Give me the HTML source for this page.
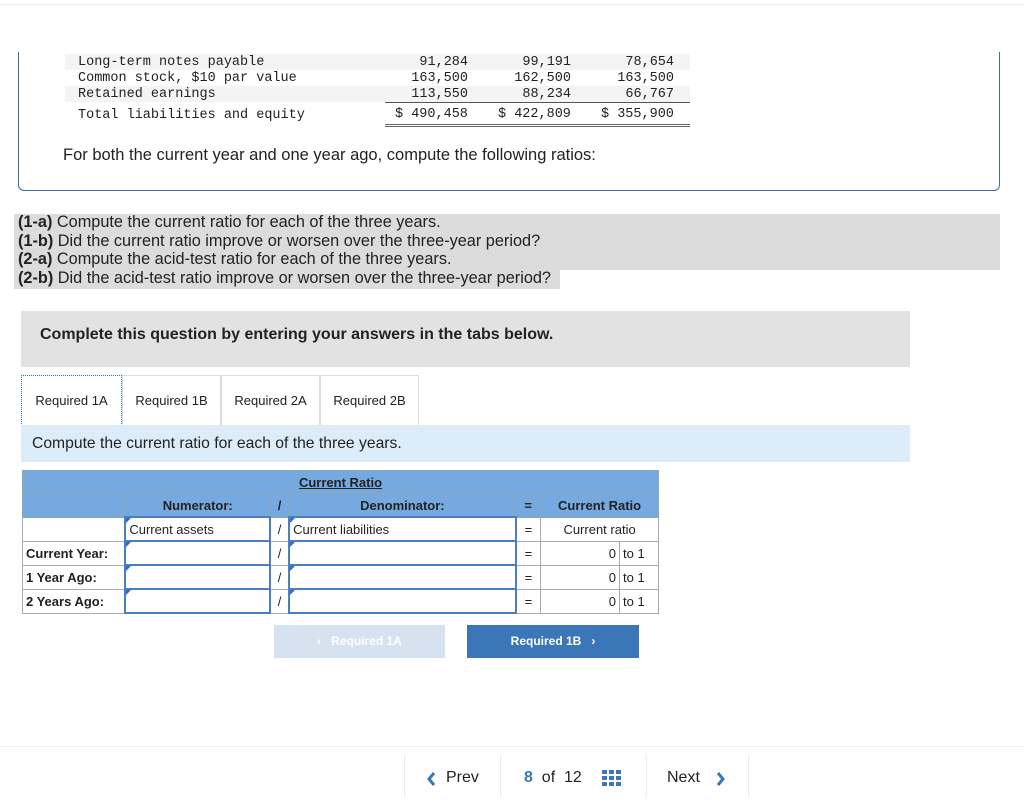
<!DOCTYPE html>
<html><head><meta charset="utf-8"><style>
body{margin:0;width:1024px;height:809px;background:#fff;position:relative;overflow:hidden;font-family:"Liberation Sans",Arial,sans-serif;color:#222}
.a{position:absolute}
.m{font-family:"Liberation Mono",monospace;font-size:13.5px;line-height:16px;white-space:pre}
.r{text-align:right}
table{border-collapse:collapse;font-size:13px}
td{border:1px solid #aaa;height:22px;padding:0 3px}
.h td{background:#75a9e0;font-weight:bold;text-align:center;border-color:#8aa}
.in{border:2px solid #4a7fbf;position:relative}
.in:before{content:"";position:absolute;left:0;top:0;border-left:5px solid #2e6fc0;border-bottom:5px solid transparent}
.c{text-align:center}
</style></head><body>
<div class="a" style="left:0;top:4px;width:1024px;border-top:1px solid #eee"></div>
<div class="a" style="left:18px;top:52px;width:980px;height:138px;border:1px solid #3d6ea8;border-top:none;border-radius:0 0 6px 6px"></div>
<div class="a" style="left:65px;top:54px;width:625px;height:16px;background:#f4f4f4"></div>
<div class="a" style="left:65px;top:86px;width:625px;height:16px;background:#f4f4f4"></div>
<div class="a m" style="left:78px;top:55px">Long-term notes payable
Common stock, $10 par value
Retained earnings</div>
<div class="a m" style="left:78px;top:108px">Total liabilities and equity</div>
<div class="a m r" style="left:380px;top:55px;width:88px">91,284
163,500
113,550</div>
<div class="a m r" style="left:480px;top:55px;width:91px">99,191
162,500
88,234</div>
<div class="a m r" style="left:590px;top:55px;width:84px">78,654
163,500
66,767</div>
<div class="a m" style="left:395px;top:107px">$ 490,458</div>
<div class="a m" style="left:498px;top:107px">$ 422,809</div>
<div class="a m" style="left:601px;top:107px">$ 355,900</div>
<div class="a" style="left:385px;top:102px;width:305px;border-top:1px solid #555"></div>
<div class="a" style="left:385px;top:124px;width:305px;border-top:3px double #666;height:2px"></div>
<div class="a" style="left:63px;top:146px;font-size:16.5px">For both the current year and one year ago, compute the following ratios:</div>

<div class="a" style="left:14px;top:214px;width:986px;height:56px;background:#dcdcdc"></div>
<div class="a" style="left:14px;top:270px;width:546px;height:19px;background:#dcdcdc"></div>
<div class="a" style="left:18px;top:213px;font-size:16.3px;line-height:18.5px"><b>(1-a)</b> Compute the current ratio for each of the three years.<br><b>(1-b)</b> Did the current ratio improve or worsen over the three-year period?<br><b>(2-a)</b> Compute the acid-test ratio for each of the three years.<br><b>(2-b)</b> Did the acid-test ratio improve or worsen over the three-year period?</div>

<div class="a" style="left:21px;top:311px;width:889px;height:56px;background:#e2e2e2"></div>
<div class="a" style="left:40px;top:326px;font-size:16px;font-weight:bold">Complete this question by entering your answers in the tabs below.</div>

<div class="a" style="left:21px;top:375px;width:99px;height:49px;border:1px dotted #2e6fc0;font-size:13px;line-height:49px;text-align:center">Required 1A</div>
<div class="a" style="left:122px;top:375px;width:97px;height:49px;border:1px solid #ddd;font-size:13px;line-height:49px;text-align:center">Required 1B</div>
<div class="a" style="left:221px;top:375px;width:97px;height:49px;border:1px solid #ddd;font-size:13px;line-height:49px;text-align:center">Required 2A</div>
<div class="a" style="left:320px;top:375px;width:97px;height:49px;border:1px solid #ddd;font-size:13px;line-height:49px;text-align:center">Required 2B</div>
<div class="a" style="left:21px;top:425px;width:889px;height:37px;background:#dcecf9"></div>
<div class="a" style="left:32px;top:435px;font-size:15.7px">Compute the current ratio for each of the three years.</div>

<table class="a" style="left:22px;top:470px;width:637px">
<tr class="h"><td colspan="7" style="height:22px"><u>Current Ratio</u></td></tr>
<tr class="h"><td style="background:#75a9e0;width:96px"></td><td style="width:138px">Numerator:</td><td style="width:12px">/</td><td style="width:220px">Denominator:</td><td style="width:18px">=</td><td colspan="2">Current Ratio</td></tr>
<tr><td></td><td class="in">Current assets</td><td class="c">/</td><td class="in">Current liabilities</td><td class="c">=</td><td colspan="2" class="c">Current ratio</td></tr>
<tr><td><b>Current Year:</b></td><td class="in"></td><td class="c">/</td><td class="in"></td><td class="c">=</td><td class="r" style="width:72px">0</td><td style="width:32px">to 1</td></tr>
<tr><td><b>1 Year Ago:</b></td><td class="in"></td><td class="c">/</td><td class="in"></td><td class="c">=</td><td class="r">0</td><td>to 1</td></tr>
<tr><td><b>2 Years Ago:</b></td><td class="in"></td><td class="c">/</td><td class="in"></td><td class="c">=</td><td class="r">0</td><td>to 1</td></tr>
</table>

<div class="a" style="left:274px;top:625px;width:171px;height:33px;background:#d6e2f0;color:#fff;font-size:12px;font-weight:bold;line-height:33px;text-align:center">‹ &nbsp; Required 1A</div>
<div class="a" style="left:467px;top:625px;width:172px;height:33px;background:#3a76b8;color:#fff;font-size:12px;font-weight:bold;line-height:33px;text-align:center">Required 1B &nbsp; ›</div>

<div class="a" style="left:0;top:746px;width:1024px;border-top:1px solid #eee"></div>
<div class="a" style="left:404px;top:754px;height:44px;border-left:1px solid #eee"></div>
<div class="a" style="left:500px;top:754px;height:44px;border-left:1px solid #eee"></div>
<div class="a" style="left:646px;top:754px;height:44px;border-left:1px solid #eee"></div>
<div class="a" style="left:748px;top:754px;height:44px;border-left:1px solid #eee"></div>
<svg class="a" style="left:426px;top:771px" width="10" height="16" viewBox="0 0 10 16"><path d="M8 2 L3 8 L8 14" stroke="#3a76b8" stroke-width="3" fill="none"/></svg>
<div class="a" style="left:446px;top:769px;font-size:16px">Prev</div>
<div class="a" style="left:524px;top:769px;font-size:16px"><b style="color:#3a76b8">8</b>&nbsp; of&nbsp; 12</div>
<svg class="a" style="left:602px;top:770px" width="20" height="18" viewBox="0 0 20 18" fill="#3a76b8"><rect x="0" y="0" width="5" height="4"/><rect x="7" y="0" width="5" height="4"/><rect x="14" y="0" width="5" height="4"/><rect x="0" y="6" width="5" height="4"/><rect x="7" y="6" width="5" height="4"/><rect x="14" y="6" width="5" height="4"/><rect x="0" y="12" width="5" height="4"/><rect x="7" y="12" width="5" height="4"/><rect x="14" y="12" width="5" height="4"/></svg>
<div class="a" style="left:667px;top:769px;font-size:16px">Next</div>
<svg class="a" style="left:716px;top:771px" width="10" height="16" viewBox="0 0 10 16"><path d="M2 2 L7 8 L2 14" stroke="#3a76b8" stroke-width="3" fill="none"/></svg>
</body></html>
